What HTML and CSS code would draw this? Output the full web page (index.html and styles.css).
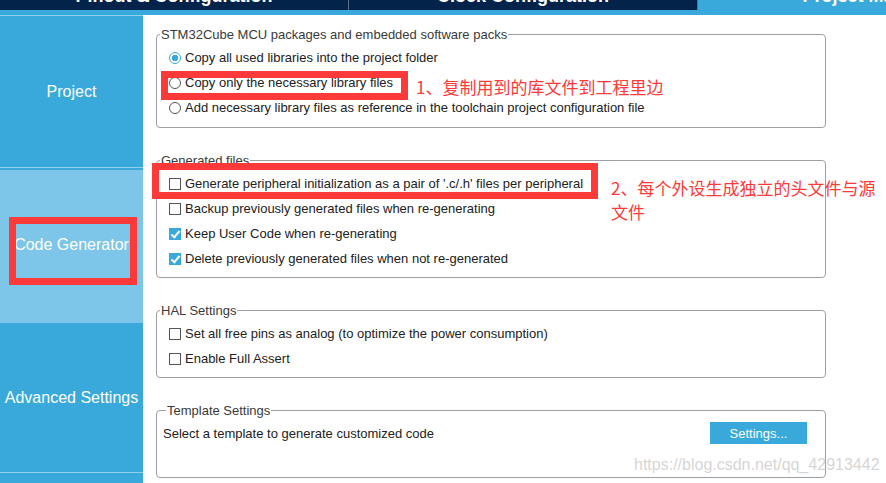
FILE: index.html
```html
<!DOCTYPE html>
<html>
<head>
<meta charset="utf-8">
<link rel="stylesheet" href="styles.css">
</head>
<body>
<div class="app">
  <div class="tabs">
    <div class="tab"><span class="tab-label">Pinout &amp; Configuration</span></div>
    <div class="tab"><span class="tab-label">Clock Configuration</span></div>
    <div class="tab tab-active"><span class="tab-label">Project Manager</span></div>
  </div>
  <div class="strip"></div>
  <div class="body">
    <nav class="sidebar">
      <div class="side-item side-first">Project</div>
      <div class="side-item side-active">Code Generator</div>
      <div class="side-item side-third">Advanced Settings</div>
      <div class="side-item side-rest"></div>
    </nav>
    <main class="content">
      <fieldset class="group g1">
        <legend>STM32Cube MCU packages and embedded software packs</legend>
        <div class="row"><span class="radio on"></span>Copy all used libraries into the project folder</div>
        <div class="row"><span class="radio"></span>Copy only the necessary library files</div>
        <div class="row"><span class="radio"></span>Add necessary library files as reference in the toolchain project configuration file</div>
      </fieldset>
      <fieldset class="group g2">
        <legend>Generated files</legend>
        <div class="row"><span class="check"></span>Generate peripheral initialization as a pair of '.c/.h' files per peripheral</div>
        <div class="row"><span class="check"></span>Backup previously generated files when re-generating</div>
        <div class="row"><span class="check on"></span>Keep User Code when re-generating</div>
        <div class="row"><span class="check on"></span>Delete previously generated files when not re-generated</div>
      </fieldset>
      <fieldset class="group g3">
        <legend>HAL Settings</legend>
        <div class="row"><span class="check"></span>Set all free pins as analog (to optimize the power consumption)</div>
        <div class="row"><span class="check"></span>Enable Full Assert</div>
      </fieldset>
      <fieldset class="group g4">
        <legend>Template Settings</legend>
        <div class="template-row">
          <span>Select a template to generate customized code</span>
          <button class="btn">Settings...</button>
        </div>
      </fieldset>
    </main>
  </div>

  <div class="mark mark-side"></div>
  <div class="mark mark-1"></div>
  <div class="mark mark-2"></div>
  <div class="note note-1">1、复制用到的库文件到工程里边</div>
  <div class="note note-2">2、每个外设生成独立的头文件与源<br>文件</div>
  <div class="watermark">https://blog.csdn.net/qq_42913442</div>
</div>
</body>
</html>
```

FILE: styles.css
```css
* { box-sizing: border-box; }
html, body { margin: 0; padding: 0; background: #fff; }
body {
  font-family: "Liberation Sans", Arial, sans-serif;
  width: 886px;
  height: 483px;
  overflow: hidden;
}
.app { position: relative; width: 886px; height: 483px; overflow: hidden; }

.tabs { display: flex; height: 10px; background: #03234b; overflow: hidden; }
.tab {
  width: 349px;
  flex: none;
  display: flex;
  justify-content: center;
  color: #fff;
  font-weight: bold;
  font-size: 18px;
  line-height: 18px;
  border-right: 1px solid #5a6f8c;
  overflow: hidden;
}
.tab-label { margin-top: -13px; white-space: nowrap; }
.tab-active { background: #39a9dc; border-right: 0; width: 349px; }
.strip { height: 5px; background: #39a9dc; }

.body { display: flex; height: 468px; }
.sidebar {
  width: 143px;
  flex: none;
  background: #39a9dc;
  display: flex;
  flex-direction: column;
}
.side-item {
  flex: none;
  display: flex;
  align-items: center;
  justify-content: center;
  color: #fff;
  font-size: 16px;
  white-space: nowrap;
  border-top: 1px solid #8fd0f0;
}
.side-first { height: 152px; }
.side-active { height: 155px; background: #7dc6e9; box-shadow: inset 0 2px 0 #39a9dc; }
.side-third { height: 150px; border-top-color: #7dc6e9; }
.side-rest { height: 20px; }

.content {
  flex: 1;
  padding: 12px 0 0 13px;
  display: flex;
  flex-direction: column;
  gap: 25px;
}
.group {
  width: 670px;
  margin: 0;
  padding: 3px 0 7px 0;
  border: 1px solid #9aa0a6;
  border-radius: 4px;
  min-width: 0;
}
.group legend {
  margin-left: 3px;
  padding: 0 1px;
  font-size: 13px;
  line-height: 15px;
  color: #3a3a3a;
}
.g2 { padding-bottom: 6px; }
.g3 { padding-bottom: 6px; }
.g4 { padding: 4px 18px 33px 6px; }

.row {
  height: 25px;
  display: flex;
  align-items: center;
  padding-left: 12px;
  font-size: 13px;
  color: #222;
  white-space: nowrap;
}
.radio {
  width: 12px;
  height: 12px;
  border: 1px solid #555;
  border-radius: 50%;
  margin-right: 4px;
  flex: none;
  background: #fff;
}
.radio.on {
  border-color: #39a9dc;
  background: radial-gradient(circle, #39a9dc 0 3px, #fff 3.5px);
}
.check {
  width: 12px;
  height: 12px;
  border: 1px solid #555;
  margin-right: 4px;
  flex: none;
  background: #fff;
  position: relative;
}
.check.on { background: #39a9dc; border-color: #39a9dc; }
.check.on::after {
  content: "";
  position: absolute;
  left: 3px;
  top: 0px;
  width: 3px;
  height: 7px;
  border: solid #fff;
  border-width: 0 2px 2px 0;
  transform: rotate(40deg);
}

.template-row {
  height: 22px;
  display: flex;
  align-items: center;
  justify-content: space-between;
  font-size: 13px;
  color: #222;
}
.btn {
  width: 97px;
  height: 22px;
  border: 0;
  background: #39a9dc;
  color: #fff;
  font-family: "Liberation Sans", Arial, sans-serif;
  font-size: 13px;
  padding: 0;
}

.mark { position: absolute; border: 7px solid #fd3a3a; }
.mark-side { left: 9px; top: 217px; width: 128px; height: 68px; }
.mark-1 { left: 161px; top: 71px; width: 247px; height: 29px; }
.mark-2 { left: 152px; top: 163px; width: 446px; height: 36px; }

.note {
  position: absolute;
  color: #fd3a3a;
  font-family: "Noto Sans CJK SC", "Liberation Sans", sans-serif;
  font-size: 17px;
  line-height: 24px;
  white-space: nowrap;
}
.note-1 { left: 416px; top: 75px; }
.note-2 { left: 611px; top: 176px; }

.watermark {
  position: absolute;
  left: 634px;
  top: 455px;
  font-size: 16px;
  line-height: 20px;
  color: rgba(200, 200, 200, 0.75);
  white-space: nowrap;
}
```
